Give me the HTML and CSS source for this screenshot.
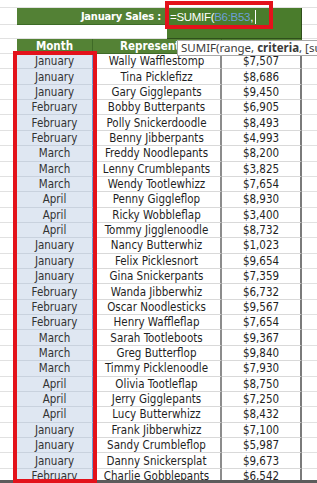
FILE: index.html
```html
<!DOCTYPE html>
<html>
<head>
<meta charset="utf-8">
<link rel="stylesheet" href="styles.css">
</head>
<body>
<div class="sheet">
  <div class="row r-top"><div class="c"></div><div class="c"></div><div class="c"></div><div class="c"></div><div class="c"></div></div>
  <div class="row r-title"><div class="c"></div><div class="c title">January Sales :</div><div class="c"></div></div>
  <div class="row r-blank"><div class="c"></div><div class="c"></div><div class="c"></div><div class="c"></div><div class="c"></div></div>
  <div class="row r-head"><div class="c"></div><div class="c head">Month</div><div class="c head head-rep">Representative</div><div class="c head">Sales</div><div class="c"></div></div>
  <div class="data" id="data"></div>
</div>
<div class="edit">=SUMIF(<span class="ref">B6:B53</span>,<span class="caret"></span></div>
<div class="hl hl-formula"></div>
<div class="tip">SUMIF(range, <b>criteria</b>, [sum_range])</div>
<div class="bottombar"></div>
<div class="hl hl-month"></div>
<script src="script.js"></script>
</body>
</html>
```

FILE: script.js
```js
const rows = [
["January","Wally Wafflestomp","$7,507"],
["January","Tina Picklefizz","$8,686"],
["January","Gary Gigglepants","$9,450"],
["February","Bobby Butterpants","$6,905"],
["February","Polly Snickerdoodle","$8,493"],
["February","Benny Jibberpants","$4,993"],
["March","Freddy Noodlepants","$8,200"],
["March","Lenny Crumblepants","$3,825"],
["March","Wendy Tootlewhizz","$7,654"],
["April","Penny Giggleflop","$8,930"],
["April","Ricky Wobbleflap","$3,400"],
["April","Tommy Jigglenoodle","$8,732"],
["January","Nancy Butterwhiz","$1,023"],
["January","Felix Picklesnort","$9,654"],
["January","Gina Snickerpants","$7,359"],
["February","Wanda Jibberwhiz","$6,732"],
["February","Oscar Noodlesticks","$9,567"],
["February","Henry Waffleflap","$7,654"],
["March","Sarah Tootleboots","$9,367"],
["March","Greg Butterflop","$9,840"],
["March","Timmy Picklenoodle","$7,930"],
["April","Olivia Tootleflap","$8,750"],
["April","Jerry Gigglepants","$7,250"],
["April","Lucy Butterwhizz","$8,432"],
["January","Frank Jibberwhizz","$7,100"],
["January","Sandy Crumbleflop","$5,987"],
["January","Danny Snickersplat","$9,673"],
["February","Charlie Gobblepants","$6,542"]
];
const d = document.getElementById('data');
d.innerHTML = rows.map(r =>
  '<div class="row r-data"><div class="c"></div><div class="c month">' + r[0] +
  '</div><div class="c rep">' + r[1] + '</div><div class="c sales">' + r[2] +
  '</div><div class="c"></div></div>').join('');
```

FILE: styles.css
```css
html, body {
  margin: 0;
  padding: 0;
  background: #ffffff;
  overflow: hidden;
  width: 317px;
  height: 483px;
}
body {
  position: relative;
  font-family: "DejaVu Sans Condensed", "Liberation Sans", sans-serif;
  font-size: 11.5px;
  color: #262626;
}
.sheet {
  display: flex;
  flex-direction: column;
}
.row {
  display: grid;
  grid-template-columns: 17px 76px 129px 80px 15px;
}
.c {
  border-bottom: 1px solid #e1e1e1;
  box-sizing: border-box;
  display: flex;
  align-items: center;
  justify-content: center;
  white-space: nowrap;
  overflow: hidden;
}
.r-top { height: 8px; }
.r-title { height: 17px; }
.r-blank { height: 14px; }
.r-head { height: 15px; }
.r-data { height: 15.37px; }
.title {
  grid-column: 2 / 5;
  background: #538135;
  color: #ffffff;
  font-weight: bold;
  font-size: 11px;
  letter-spacing: -0.2px;
  justify-content: flex-end;
  padding-right: 141px;
  border-bottom: 1px solid #3d6b26;
}
.head {
  background: #548235;
  color: #ffffff;
  font-weight: bold;
  border-right: 1px solid #3f6a27;
  border-bottom: 1px solid #3f6a27;
}
.head-rep {
  justify-content: flex-start;
  padding-left: 27px;
}
.month {
  background: #dfe7f2;
  border-right: 1px solid #6f9bd3;
  border-bottom: 1px solid #c9d2de;
  color: #333333;
}
.rep {
  border-bottom: 1px solid #d9d9d9;
  border-right: 2px solid #8c8c8c;
  color: #1f1f1f;
}
.sales {
  border-bottom: 1px solid #d9d9d9;
  border-right: 2px solid #7a7a7a;
  color: #1f1f1f;
}
.edit {
  position: absolute;
  left: 167px;
  top: 8px;
  width: 135px;
  height: 31px;
  box-sizing: border-box;
  background: #4a7c2c;
  border-right: 1px solid #2f4f1c;
  border-bottom: 1px solid #2f4f1c;
  color: #ffffff;
  font-family: "Liberation Sans", sans-serif;
  font-size: 11.5px;
  letter-spacing: -0.3px;
  padding: 1px 0 0 3px;
  display: flex;
  align-items: flex-start;
  line-height: 16px;
}
.ref {
  color: #6d9fd8;
}
.caret {
  display: inline-block;
  width: 1px;
  height: 14px;
  background: #ffffff;
  margin-left: 2px;
  margin-top: 1px;
}
.hl {
  position: absolute;
  border: 4px solid #e3121b;
  box-sizing: border-box;
}
.hl-formula {
  left: 165px;
  top: 1px;
  width: 108px;
  height: 28px;
}
.hl-month {
  left: 13px;
  top: 51px;
  width: 84px;
  height: 432px;
}
.tip {
  position: absolute;
  left: 177px;
  top: 40px;
  width: 140px;
  height: 16px;
  box-sizing: border-box;
  background: #ffffff;
  border: 1px solid #a9a9a9;
  border-right: none;
  color: #3a3a3a;
  font-family: "Noto Sans", "Open Sans", sans-serif;
  font-size: 11.5px;
  line-height: 14px;
  padding-left: 3px;
  white-space: nowrap;
  overflow: hidden;
}
.bottombar {
  position: absolute;
  left: 0;
  bottom: 0;
  width: 317px;
  height: 3px;
  background: #5c5c5c;
}
```
